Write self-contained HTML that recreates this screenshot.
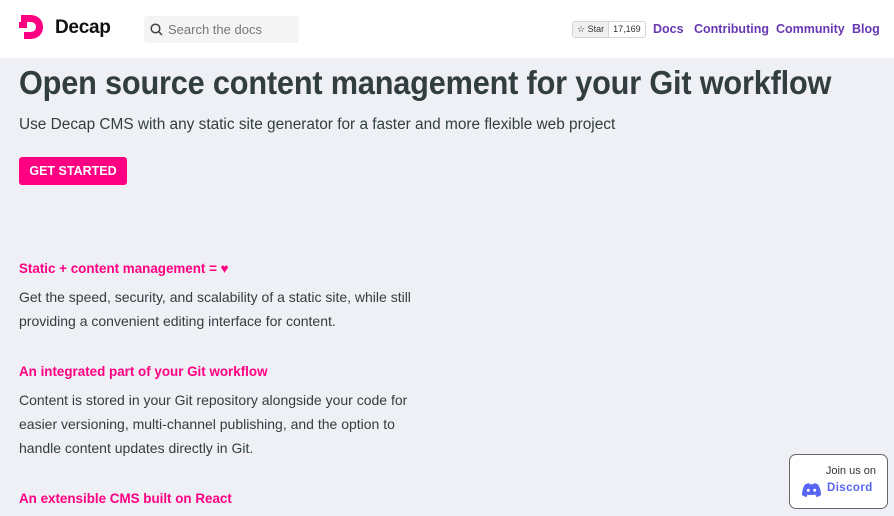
<!DOCTYPE html>
<html><head><meta charset="utf-8"><style>
*{margin:0;padding:0;box-sizing:border-box}
body{width:894px;height:516px;overflow:hidden;background:#eff0f5;font-family:"Liberation Sans",sans-serif;position:relative}
header{position:absolute;left:0;top:0;width:894px;height:58px;background:#fff}
.logo{position:absolute;left:19px;top:14px}
.brand{position:absolute;left:55px;top:17px;font-size:19px;font-weight:bold;color:#111;letter-spacing:-0.3px}
.search{position:absolute;left:144px;top:16px;width:155px;height:27px;background:#f4f4f5;border-radius:4px;font-size:13px;color:#777;padding:6px 0 0 24px}
.search svg{position:absolute;left:6px;top:7px}
.star{position:absolute;left:572px;top:21px;height:17px;border:1px solid #d5d5d8;border-radius:3px;font-size:9px;color:#333;display:flex}
.star span{padding:2px 4px}
.star span:first-child{background:#f0f0f2;border-right:1px solid #d5d5d8}
nav{position:absolute;top:22px;font-size:12.5px;font-weight:bold;color:#6838b2;white-space:nowrap}
h1{position:absolute;left:19px;top:64px;font-size:33px;color:#313d3e;white-space:nowrap;transform-origin:left;transform:scaleX(0.93);letter-spacing:-0.2px}
.sub{position:absolute;left:19px;top:116px;font-size:15.4px;color:#313d3e;white-space:nowrap}
.btn{position:absolute;left:19px;top:157px;width:108px;height:28px;background:#ff0082;border-radius:3px;color:#fff;font-weight:bold;font-size:12.5px;text-align:center;line-height:28px}
h3{position:absolute;left:19px;font-size:13.4px;color:#ff0082;white-space:nowrap}
p{position:absolute;left:19px;font-size:14px;color:#313d3e;line-height:24px;width:400px}
.disc{position:absolute;left:789px;top:454px;width:99px;height:55px;background:#fff;border:1px solid #666;border-radius:7px}
</style></head><body>
<header>
<svg class="logo" width="28" height="26" viewBox="0 0 28 26"><path d="M2 1h9c8 0 13 5 13 12s-5 12-13 12H5v-7h6c4 0 6-2 6-5s-2-5-6-5H2z" fill="#ff0082"/><path d="M0 8h8v6H0z" fill="#ff0082"/></svg>
<div class="brand">Decap</div>
<div class="search"><svg width="13" height="13" viewBox="0 0 13 13"><circle cx="5.5" cy="5.5" r="4.3" fill="none" stroke="#444" stroke-width="1.5"/><path d="M8.7 8.7L12 12" stroke="#444" stroke-width="1.5"/></svg>Search the docs</div>
<div class="star"><span>☆ Star</span><span>17,169</span></div>
<nav style="left:653px">Docs</nav>
<nav style="left:694px">Contributing</nav>
<nav style="left:776px">Community</nav>
<nav style="left:852px">Blog</nav>
</header>
<h1>Open source content management for your Git workflow</h1>
<div class="sub">Use Decap CMS with any static site generator for a faster and more flexible web project</div>
<div class="btn">GET STARTED</div>
<h3 style="top:261px">Static + content management = ♥</h3>
<p style="top:285px">Get the speed, security, and scalability of a static site, while still providing a convenient editing interface for content.</p>
<h3 style="top:364px">An integrated part of your Git workflow</h3>
<p style="top:388px">Content is stored in your Git repository alongside your code for easier versioning, multi-channel publishing, and the option to handle content updates directly in Git.</p>
<h3 style="top:491px">An extensible CMS built on React</h3>
<div class="disc">
<div style="position:absolute;right:11px;top:10px;font-size:11px;color:#333">Join us on</div>
<svg style="position:absolute;left:12px;top:28px" width="19" height="14" viewBox="0 0 19 14"><path d="M3 1.5C5 .5 7 0 7 0l.6 1.2h3.8L12 0s2 .5 4 1.5c2 3 3 7 3 10.5-1.5 1.2-3 1.8-4.5 2l-1-1.7 1.8-1C12 12.3 7 12.3 3.7 11.3l1.8 1-1 1.7C3 13.8 1.5 13.2 0 12 0 8.5 1 4.5 3 1.5z" fill="#5865f2"/><circle cx="6.3" cy="7.3" r="1.5" fill="#fff"/><circle cx="12.7" cy="7.3" r="1.5" fill="#fff"/></svg>
<div style="position:absolute;left:37px;top:27px;font-size:11.5px;font-weight:bold;color:#5865f2;letter-spacing:0.4px">Discord</div>
</div>
</body></html>
